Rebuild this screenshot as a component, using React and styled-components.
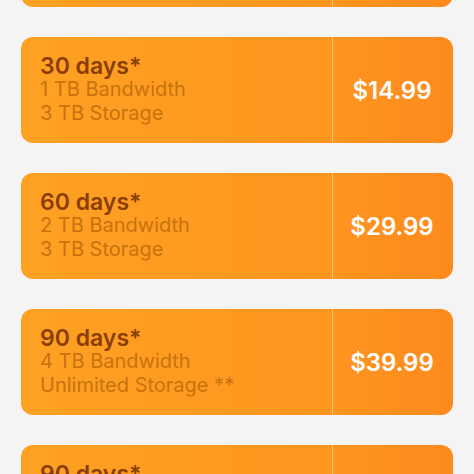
import React from 'react'
import styled, { createGlobalStyle } from 'styled-components'

const GlobalStyle = createGlobalStyle`
  html, body {
    margin: 0;
    padding: 0;
    background: #f4f4f4;
    overflow: hidden;
  }
  body {
    font-family: Inter, "Liberation Sans", sans-serif;
  }
`;

const Page = styled.div`
  width: 474px;
  height: 474px;
  overflow: hidden;
  background: #f4f4f4;
`;

const List = styled.div`
  display: flex;
  flex-direction: column;
  gap: 30px;
  padding: 0 21px;
  margin-top: -99px;
`;

const Card = styled.div`
  display: grid;
  grid-template-columns: 1fr 121px;
  height: 106px;
  border-radius: 12px;
  overflow: hidden;
  background: linear-gradient(90deg, #fea123 0%, #fe961f 70%, #fe8a1e 100%);
`;

const Info = styled.div`
  display: flex;
  flex-direction: column;
  justify-content: center;
  padding-left: 19px;
`;

const Title = styled.div`
  font-size: 23px;
  line-height: 23.5px;
  font-weight: 600;
  color: #8a3d06;
`;

const Detail = styled.div`
  font-size: 20px;
  line-height: 23.5px;
  font-weight: 400;
  color: #c9720f;
`;

const Price = styled.div`
  display: flex;
  align-items: center;
  justify-content: center;
  border-left: 1px solid rgba(255, 214, 150, 0.7);
  font-size: 24px;
  font-weight: 600;
  color: #ffffff;
  padding-right: 2px;
`;

const plans = [
  { days: '30 days*', lines: ['1 TB Bandwidth', '3 TB Storage'], price: '$9.99' },
  { days: '30 days*', lines: ['1 TB Bandwidth', '3 TB Storage'], price: '$14.99' },
  { days: '60 days*', lines: ['2 TB Bandwidth', '3 TB Storage'], price: '$29.99' },
  { days: '90 days*', lines: ['4 TB Bandwidth', 'Unlimited Storage **'], price: '$39.99' },
  { days: '90 days*', lines: ['4 TB Bandwidth', 'Unlimited Storage **'], price: '$49.99' },
];

const App = () => {
  return (
    <Page>
      <GlobalStyle />
      <List>
        {plans.map((p, i) => (
          <Card key={i}>
            <Info>
              <Title>{p.days}</Title>
              {p.lines.map((l) => (
                <Detail key={l}>{l}</Detail>
              ))}
            </Info>
            <Price>{p.price}</Price>
          </Card>
        ))}
      </List>
    </Page>
  )
}

export default App
